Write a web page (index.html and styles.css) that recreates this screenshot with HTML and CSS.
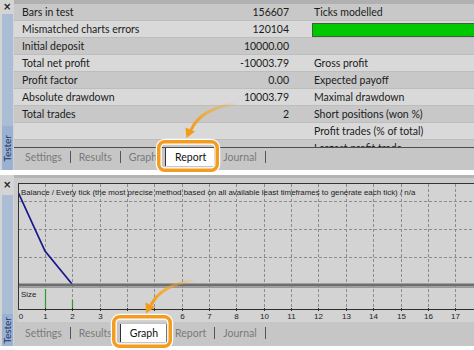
FILE: index.html
```html
<!DOCTYPE html>
<html>
<head>
<meta charset="utf-8">
<title>Tester</title>
<link rel="stylesheet" href="styles.css">
</head>
<body>
<div class="panel panel-top">
  <div class="side">
    <div class="close">×</div>
    <div class="strip"><div class="strip-label"><span>Tester</span></div></div>
  </div>
  <div class="main">
    <div class="report">
      <div class="row"><span class="k">Bars in test</span><span class="v">156607</span><span class="sp"></span><span class="k2">Ticks modelled</span></div>
      <div class="row"><span class="k">Mismatched charts errors</span><span class="v">120104</span><span class="sp"></span><span class="k2"><span class="quality"></span></span></div>
      <div class="row"><span class="k">Initial deposit</span><span class="v">10000.00</span><span class="sp"></span><span class="k2"></span></div>
      <div class="row"><span class="k">Total net profit</span><span class="v">-10003.79</span><span class="sp"></span><span class="k2">Gross profit</span></div>
      <div class="row"><span class="k">Profit factor</span><span class="v">0.00</span><span class="sp"></span><span class="k2">Expected payoff</span></div>
      <div class="row"><span class="k">Absolute drawdown</span><span class="v">10003.79</span><span class="sp"></span><span class="k2">Maximal drawdown</span></div>
      <div class="row"><span class="k">Total trades</span><span class="v">2</span><span class="sp"></span><span class="k2">Short positions (won %)</span></div>
      <div class="row"><span class="k"></span><span class="v"></span><span class="sp"></span><span class="k2">Profit trades (% of total)</span></div>
      <div class="row"><span class="k"></span><span class="v"></span><span class="sp"></span><span class="k2">Largest profit trade</span></div>
    </div>
    <div class="tabs">
      <span class="tab">Settings</span><span class="sep"></span>
      <span class="tab">Results</span><span class="sep"></span>
      <span class="tab">Graph</span>
      <span class="tab active">Report</span>
      <span class="tab">Journal</span><span class="sep"></span>
    </div>
  </div>
</div>

<div class="panel panel-bottom">
  <div class="side side-b">
    <div class="close close-b">×</div>
    <div class="strip"><div class="strip-label strip-label-b"><span>Tester</span></div></div>
  </div>
  <div class="main main-b">
    <div class="chart-head"></div>
    <div class="chart">
      <svg class="chart-svg" width="456" height="139" viewBox="0 0 456 139" xmlns="http://www.w3.org/2000/svg">
        <rect x="0" y="0" width="456" height="139" fill="#d3d3d3"/>
        <g stroke="#8c8c8c" stroke-width="1" stroke-dasharray="3 2" fill="none">
          <path d="M27.5 1V126M54.5 1V126M82.5 1V126M109.5 1V126M136.5 1V126M164.5 1V126M191.5 1V126M218.5 1V126M246.5 1V126M273.5 1V126M300.5 1V126M328.5 1V126M355.5 1V126M383.5 1V126M410.5 1V126M437.5 1V126"/>
          <path d="M1 18.5H456M1 46.5H456M1 74.5H456"/>
        </g>
        <text class="ctitle" x="3" y="12">Balance / Every tick (the most precise method based on all available least timeframes to generate each tick) / n/a</text>
        <polyline points="0.5,10 27,68 54,101" fill="none" stroke="#17178c" stroke-width="1.7"/>
        <rect x="0" y="100.5" width="456" height="3" fill="#6e6e6e"/>
        <line x1="0" y1="104.5" x2="456" y2="104.5" stroke="#9a9a9a" stroke-width="1"/>
        <text class="ctitle" x="3" y="114">Size</text>
        <line x1="27.5" y1="106" x2="27.5" y2="126" stroke="#2c9a2c" stroke-width="1.2"/>
        <line x1="54.5" y1="117" x2="54.5" y2="126" stroke="#2c9a2c" stroke-width="1.2"/>
        <line x1="0" y1="126.5" x2="456" y2="126.5" stroke="#2e2e2e" stroke-width="1"/>
        <g stroke="#2e2e2e" stroke-width="1">
          <path d="M27.5 125V128M54.5 125V128M82.5 125V128M109.5 125V128M136.5 125V128M164.5 125V128M191.5 125V128M218.5 125V128M246.5 125V128M273.5 125V128M300.5 125V128M328.5 125V128M355.5 125V128M383.5 125V128M410.5 125V128M437.5 125V128"/>
        </g>
        <line x1="0.5" y1="0" x2="0.5" y2="127" stroke="#333" stroke-width="1"/>
        <line x1="0" y1="0.5" x2="456" y2="0.5" stroke="#333" stroke-width="1"/>
        <g class="axis">
          <text x="3" y="136" text-anchor="middle">0</text>
          <text x="27.5" y="136" text-anchor="middle">1</text>
          <text x="54.5" y="136" text-anchor="middle">2</text>
          <text x="82.5" y="136" text-anchor="middle">3</text>
          <text x="109.5" y="136" text-anchor="middle">4</text>
          <text x="136.5" y="136" text-anchor="middle">5</text>
          <text x="164.5" y="136" text-anchor="middle">6</text>
          <text x="191.5" y="136" text-anchor="middle">7</text>
          <text x="218.5" y="136" text-anchor="middle">8</text>
          <text x="246.5" y="136" text-anchor="middle">10</text>
          <text x="273.5" y="136" text-anchor="middle">11</text>
          <text x="300.5" y="136" text-anchor="middle">12</text>
          <text x="328.5" y="136" text-anchor="middle">13</text>
          <text x="355.5" y="136" text-anchor="middle">14</text>
          <text x="383.5" y="136" text-anchor="middle">15</text>
          <text x="410.5" y="136" text-anchor="middle">16</text>
          <text x="437.5" y="136" text-anchor="middle">17</text>
        </g>
      </svg>
    </div>
    <div class="tabs tabs-b">
      <span class="tab">Settings</span><span class="sep"></span>
      <span class="tab">Results</span>
      <span class="tab active">Graph</span>
      <span class="tab">Report</span><span class="sep"></span>
      <span class="tab">Journal</span><span class="sep"></span>
    </div>
  </div>
</div>

<svg class="annot" width="474" height="350" viewBox="0 0 474 350" xmlns="http://www.w3.org/2000/svg">
  <defs>
    <linearGradient id="g1" gradientUnits="userSpaceOnUse" x1="236" y1="104" x2="192" y2="130">
      <stop offset="0" stop-color="#f5a623" stop-opacity="0.05"/>
      <stop offset="0.6" stop-color="#f5a623" stop-opacity="0.8"/>
      <stop offset="1" stop-color="#f39c1a" stop-opacity="1"/>
    </linearGradient>
    <linearGradient id="g2" gradientUnits="userSpaceOnUse" x1="195" y1="280" x2="151" y2="305">
      <stop offset="0" stop-color="#f5a623" stop-opacity="0.05"/>
      <stop offset="0.6" stop-color="#f5a623" stop-opacity="0.8"/>
      <stop offset="1" stop-color="#f39c1a" stop-opacity="1"/>
    </linearGradient>
  </defs>
  <rect x="158.75" y="141.75" width="58.5" height="28.5" rx="6" fill="none" stroke="#ffffff" stroke-width="6"/>
  <rect x="158.75" y="141.75" width="58.5" height="28.5" rx="6" fill="none" stroke="#f39c1f" stroke-width="3.5"/>
  <path d="M236 104 Q201 108 191 130" fill="none" stroke="url(#g1)" stroke-width="3"/>
  <polygon points="186.5,138 195,131.5 185.5,127.5" fill="#f39c1a"/>

  <rect x="113.75" y="316.75" width="56.5" height="29.5" rx="6" fill="none" stroke="#ffffff" stroke-width="6"/>
  <rect x="113.75" y="316.75" width="56.5" height="29.5" rx="6" fill="none" stroke="#f39c1f" stroke-width="3.5"/>
  <path d="M195 280 Q161 285 151 305" fill="none" stroke="url(#g2)" stroke-width="3"/>
  <polygon points="146,313.5 155,307 145.5,302.5" fill="#f39c1a"/>
</svg>
</body>
</html>
```

FILE: styles.css
```css
* { box-sizing: border-box; }
html, body { margin: 0; padding: 0; }
body {
  width: 474px;
  height: 350px;
  overflow: hidden;
  position: relative;
  background: #ffffff;
  font-family: Lato, "Open Sans", sans-serif;
  font-size: 10.5px;
  color: #1b1b1b;
}
.panel { display: flex; }
.panel-top { height: 170px; }
.panel-bottom { height: 171px; margin-top: 5px; }

.side {
  width: 14px;
  display: flex;
  flex-direction: column;
  background: #d4d4d4;
  padding-left: 2px;
}
.close {
  height: 14px;
  line-height: 14px;
  font-family: "DejaVu Sans", sans-serif;
  font-size: 10px;
  font-weight: bold;
  color: #222;
  padding-left: 1px;
}
.close-b { height: 20px; line-height: 20px; }
.strip {
  flex: 1;
  background: #abbdd5;
  display: flex;
  flex-direction: column;
  justify-content: flex-end;
  width: 11px;
}
.strip-label {
  height: 44px;
  background: #9ab1d1;
  display: flex;
  align-items: center;
  justify-content: center;
}
.strip-label-b { height: 32px; }
.strip-label span {
  writing-mode: vertical-rl;
  transform: rotate(180deg);
  color: #1d3766;
  font-size: 10px;
  line-height: 11px;
}

.main {
  flex: 1;
  display: flex;
  flex-direction: column;
  min-width: 0;
}
.report {
  height: 148px;
  padding-top: 4px;
  background: #b0b0b0;
  border-bottom: 1px solid #4e4e4e;
  overflow: hidden;
}
.row {
  display: grid;
  grid-template-columns: 196px 79px 21px 1fr;
  height: 17px;
  line-height: 16px;
  border-bottom: 1px solid #bdbdbd;
  background: #c8c8c8;
  white-space: nowrap;
}
.row:nth-child(even) { background: #d9d9d9; }
.k { padding-left: 8px; }
.v { text-align: right; }
.k2 { padding-left: 4px; }
.quality {
  display: block;
  height: 14px;
  margin-top: 2px;
  margin-left: -2px;
  background: #00c800;
  border: 1px solid #3f5f3f;
  border-right: none;
}

.tabs {
  height: 22px;
  background: #c6c6c6;
  display: flex;
  align-items: flex-start;
  padding-left: 3px;
}
.tab {
  height: 18px;
  line-height: 18px;
  padding: 0 8px;
  color: #7a7a7a;
}
.sep {
  width: 1px;
  height: 12px;
  margin-top: 3px;
  background: #555;
}
.tab.active {
  background: #ffffff;
  color: #111;
  border-left: 1px solid #333;
  border-right: 1px solid #777;
  padding: 0 8px 0 9px;
}

.main-b { background: #cbcbcb; }
.chart-head {
  height: 8px;
  border-top: 3px solid #b4b4b4;
  background: #cbcbcb;
}
.chart {
  height: 139px;
  margin-left: 4px;
  display: flex;
}
.chart-svg { display: block; }
.ctitle {
  font-family: "Liberation Sans", Arial, sans-serif;
  font-size: 7.9px;
  fill: #222;
}
.axis text {
  font-family: "Liberation Sans", Arial, sans-serif;
  font-size: 8px;
  fill: #222;
}
.tabs-b { height: 24px; padding-top: 2px; }

.annot {
  position: absolute;
  left: 0;
  top: 0;
  pointer-events: none;
}
```
